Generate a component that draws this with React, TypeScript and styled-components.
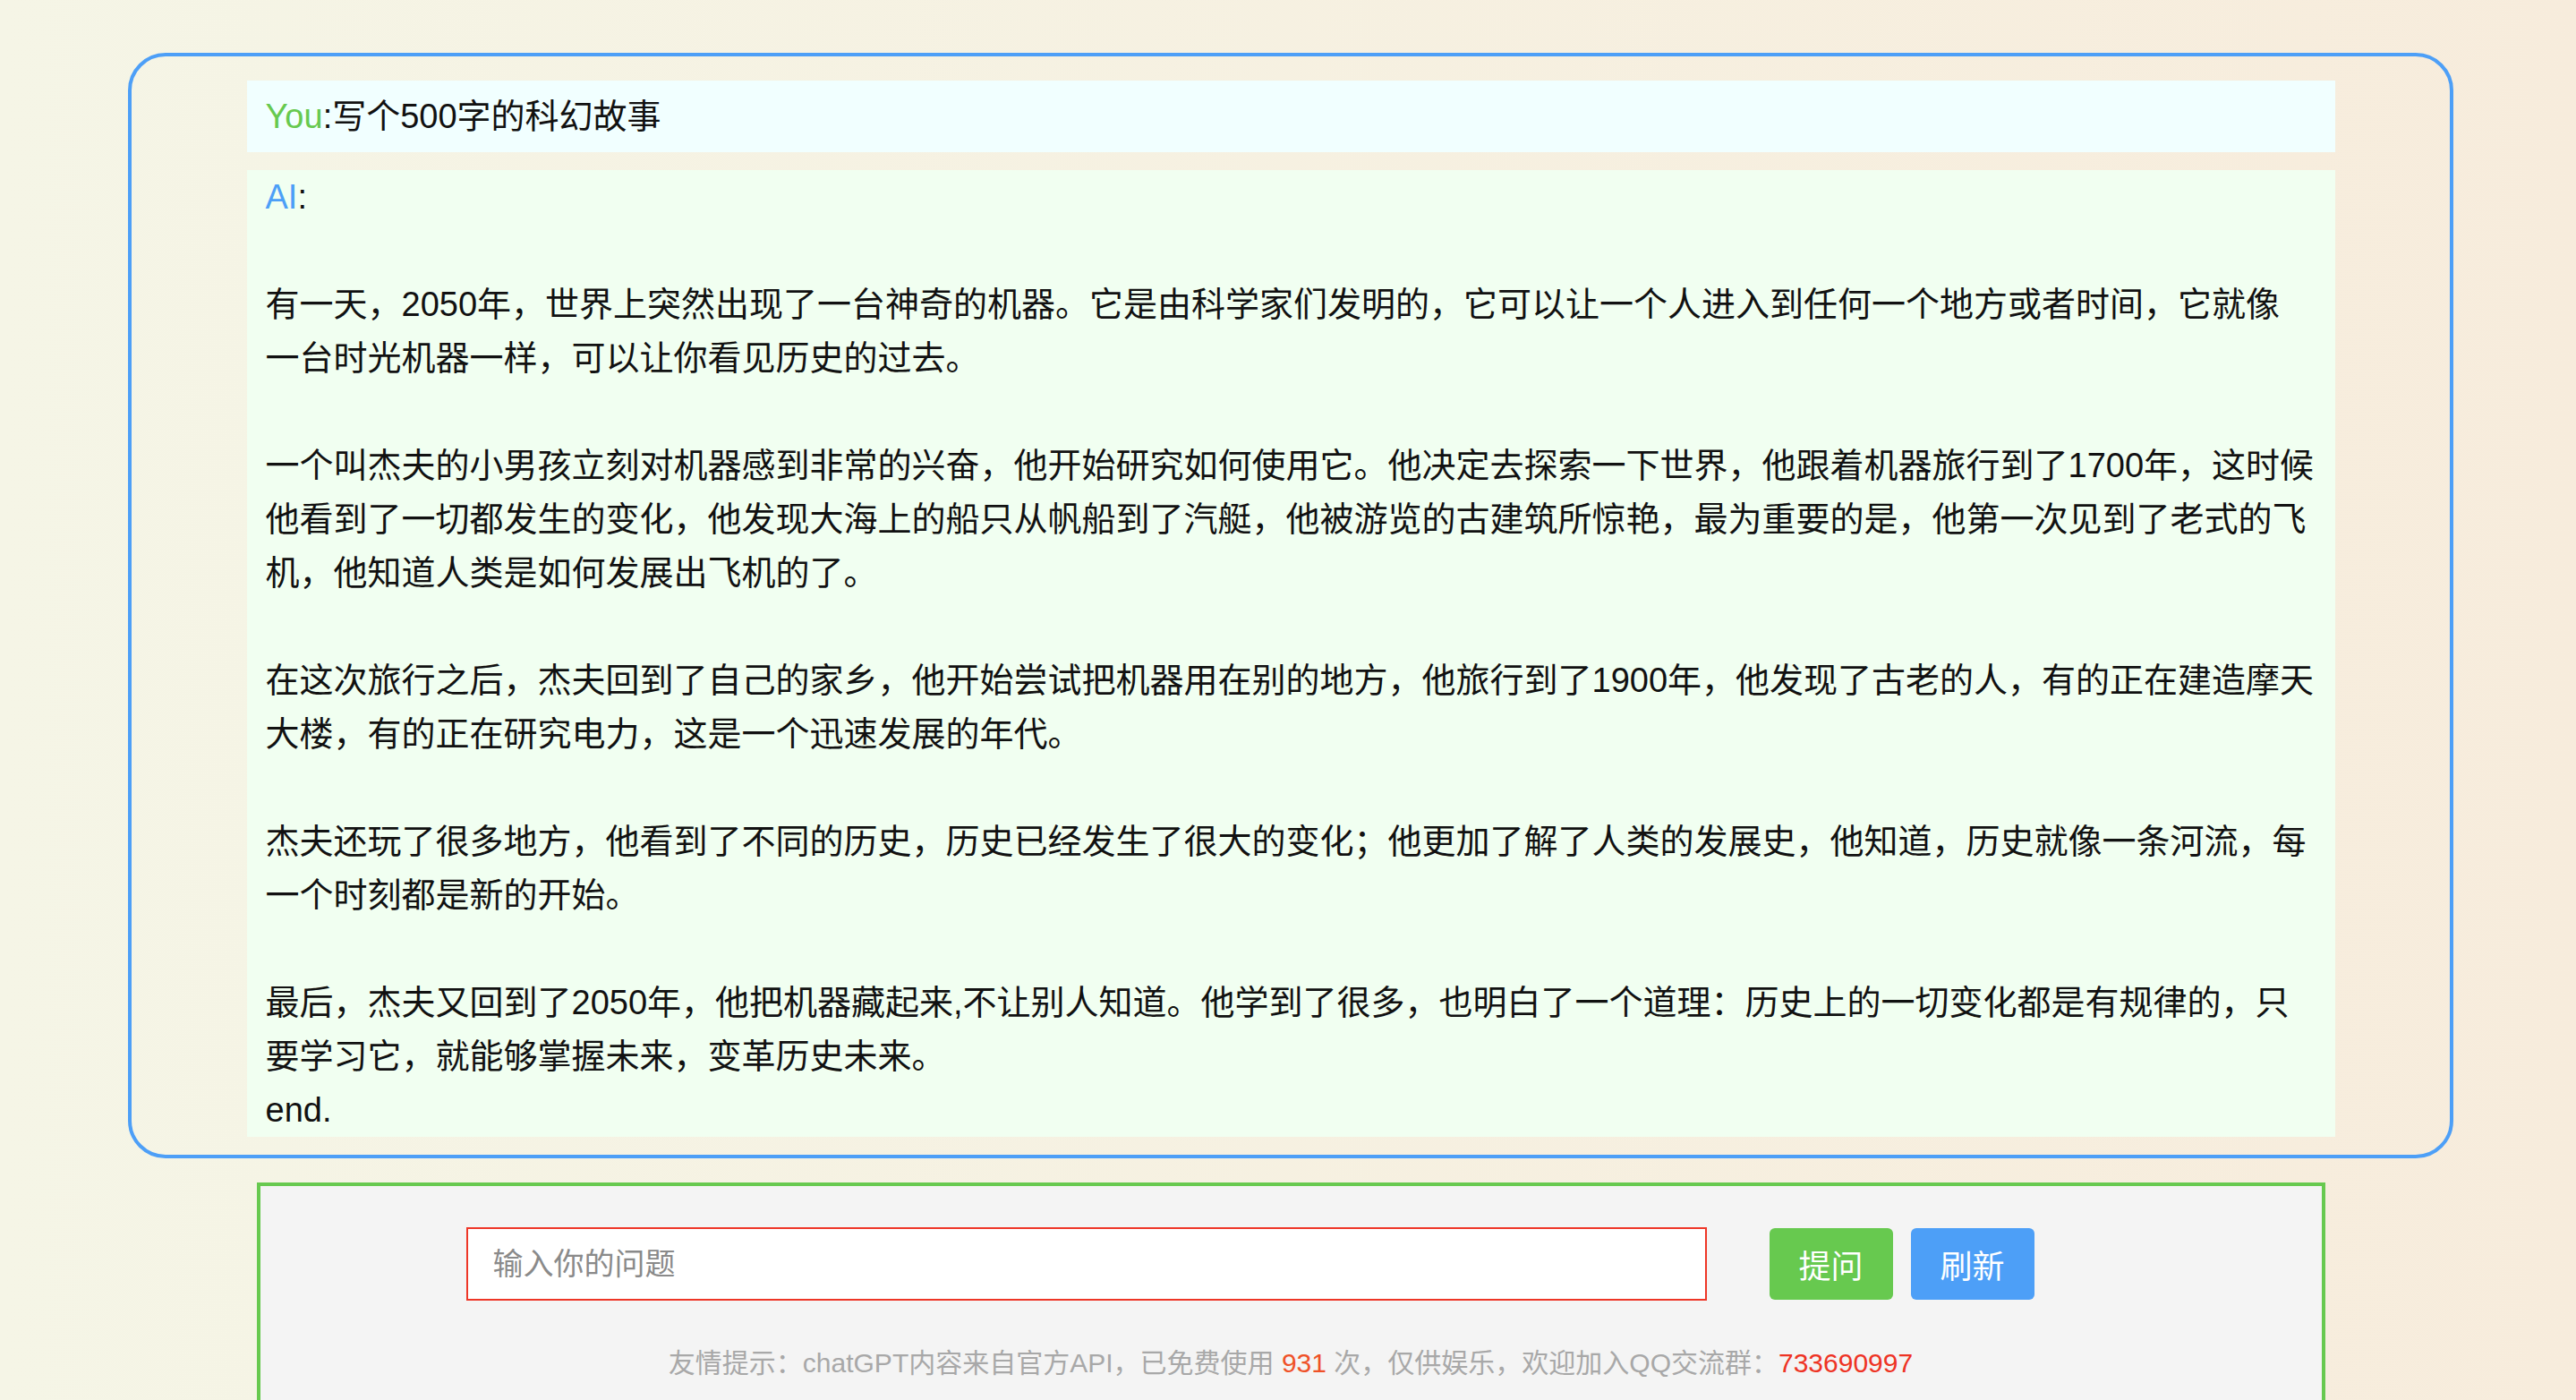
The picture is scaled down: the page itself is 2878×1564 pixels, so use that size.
import React from "react";
import styled, { createGlobalStyle } from "styled-components";

const GlobalStyle = createGlobalStyle`
  html, body {
    margin: 0;
    padding: 0;
  }
  body {
    min-height: 100vh;
    padding-left: 6px;
    background: linear-gradient(to right, #f5f5e6, #f7ecdc);
    font-family: "Liberation Sans", "Noto Sans CJK SC", sans-serif;
    overflow: hidden;
  }
`;

const aiLines = [
  "",
  "有一天，2050年，世界上突然出现了一台神奇的机器。它是由科学家们发明的，它可以让一个人进入到任何一个地方或者时间，它就像",
  "一台时光机器一样，可以让你看见历史的过去。",
  "",
  "一个叫杰夫的小男孩立刻对机器感到非常的兴奋，他开始研究如何使用它。他决定去探索一下世界，他跟着机器旅行到了1700年，这时候",
  "他看到了一切都发生的变化，他发现大海上的船只从帆船到了汽艇，他被游览的古建筑所惊艳，最为重要的是，他第一次见到了老式的飞",
  "机，他知道人类是如何发展出飞机的了。",
  "",
  "在这次旅行之后，杰夫回到了自己的家乡，他开始尝试把机器用在别的地方，他旅行到了1900年，他发现了古老的人，有的正在建造摩天",
  "大楼，有的正在研究电力，这是一个迅速发展的年代。",
  "",
  "杰夫还玩了很多地方，他看到了不同的历史，历史已经发生了很大的变化；他更加了解了人类的发展史，他知道，历史就像一条河流，每",
  "一个时刻都是新的开始。",
  "",
  "最后，杰夫又回到了2050年，他把机器藏起来,不让别人知道。他学到了很多，也明白了一个道理：历史上的一切变化都是有规律的，只",
  "要学习它，就能够掌握未来，变革历史未来。",
  "end.",
];

// chat area
const ChatBox = styled.div`
  box-sizing: border-box;
  width: 2598px;
  margin: 59px auto 0;
  padding: 27px 0 20px;
  border: 4px solid #4d9ff7;
  border-radius: 42px;
  display: flex;
  flex-direction: column;
  gap: 20px;
`;

const Message = styled.div<{ $kind: "user" | "ai" }>`
  box-sizing: border-box;
  width: 2333px;
  margin: 0 auto;
  padding: ${(p) => (p.$kind === "user" ? "10px 21px" : "0 21px")};
  background: ${(p) => (p.$kind === "user" ? "#f1ffff" : "#f1fff1")};
  font-size: 38px;
  line-height: 60px;
  color: #111;
`;

const Who = styled.span<{ $color: string }>`
  color: ${(p) => p.$color};
`;

const Line = styled.div`
  white-space: nowrap;
  min-height: 60px;
`;

// input panel
const Panel = styled.div`
  box-sizing: border-box;
  width: 2311px;
  margin: 27px auto 0;
  padding: 46px 0 60px;
  border: 4px solid #67c94f;
  background: #f4f4f4;
`;

const InputRow = styled.div`
  display: flex;
  align-items: center;
  padding-left: 230px;
`;

const QuestionInput = styled.input`
  box-sizing: border-box;
  width: 1386px;
  height: 82px;
  padding: 0 28px;
  border: 2px solid #ee3627;
  background: #fff;
  outline: none;
  font-family: "Liberation Sans", "Noto Sans CJK SC", sans-serif;
  font-size: 34px;
  color: #333;

  &::placeholder {
    color: #8a8a8a;
  }
`;

const ActionButton = styled.button<{ $color: string; $gap: number }>`
  box-sizing: border-box;
  width: 138px;
  height: 80px;
  margin-left: ${(p) => p.$gap}px;
  border: none;
  border-radius: 6px;
  background: ${(p) => p.$color};
  color: #fff;
  font-family: "Liberation Sans", "Noto Sans CJK SC", sans-serif;
  font-size: 36px;
  cursor: pointer;
`;

const Tip = styled.div`
  margin-top: 50px;
  text-align: center;
  font-size: 30px;
  line-height: 40px;
  color: #a8a8a8;
`;

const Num = styled.span<{ $color: string }>`
  color: ${(p) => p.$color};
`;

export default function App() {
  return (
    <>
      <GlobalStyle />
      <ChatBox>
        <Message $kind="user">
          <Who $color="#67c94f">You</Who>:写个500字的科幻故事
        </Message>
        <Message $kind="ai">
          <Line>
            <Who $color="#4d9ff7">AI</Who>:
          </Line>
          {aiLines.map((line, i) => (
            <Line key={i}>{line}</Line>
          ))}
        </Message>
      </ChatBox>

      <Panel>
        <InputRow>
          <QuestionInput placeholder="输入你的问题" />
          <ActionButton $color="#67c94f" $gap={70}>
            提问
          </ActionButton>
          <ActionButton $color="#4d9ff7" $gap={20}>
            刷新
          </ActionButton>
        </InputRow>
        <Tip>
          友情提示：chatGPT内容来自官方API，已免费使用 <Num $color="#ef5128">931</Num> 次，仅供娱乐，欢迎加入QQ交流群：
          <Num $color="#ee3324">733690997</Num>
        </Tip>
      </Panel>
    </>
  );
}
